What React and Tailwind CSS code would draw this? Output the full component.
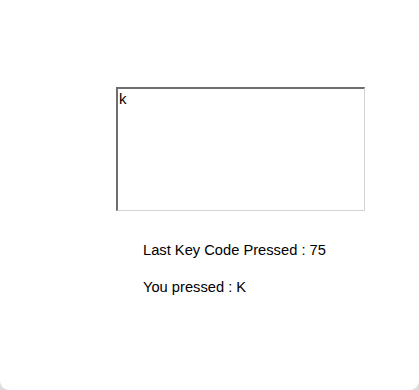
export default function App() {
  return (
    <div className="w-[419px] h-[390px] bg-[#dcdcdc]">
      <div className="w-full h-full bg-white rounded-b-[9px] pt-[87px] pl-[116px] font-['Liberation_Sans',Arial,sans-serif] text-black">
        <textarea
          defaultValue="k"
          readOnly
          className="block w-[249px] h-[124px] resize-none outline-none bg-white border-t-2 border-l-2 border-r border-b border-t-[#6e6e6e] border-l-[#6e6e6e] border-r-[#d4d4d4] border-b-[#d4d4d4] px-px py-px text-[15px] leading-[17px] font-['Liberation_Sans',Arial,sans-serif] text-black"
        />
        <div className="pl-[27px] pt-[31px] text-[14.7px] leading-[17px]">
          <p>Last Key Code Pressed : 75</p>
          <p className="mt-[20px]">You pressed : K</p>
        </div>
      </div>
    </div>
  );
}
